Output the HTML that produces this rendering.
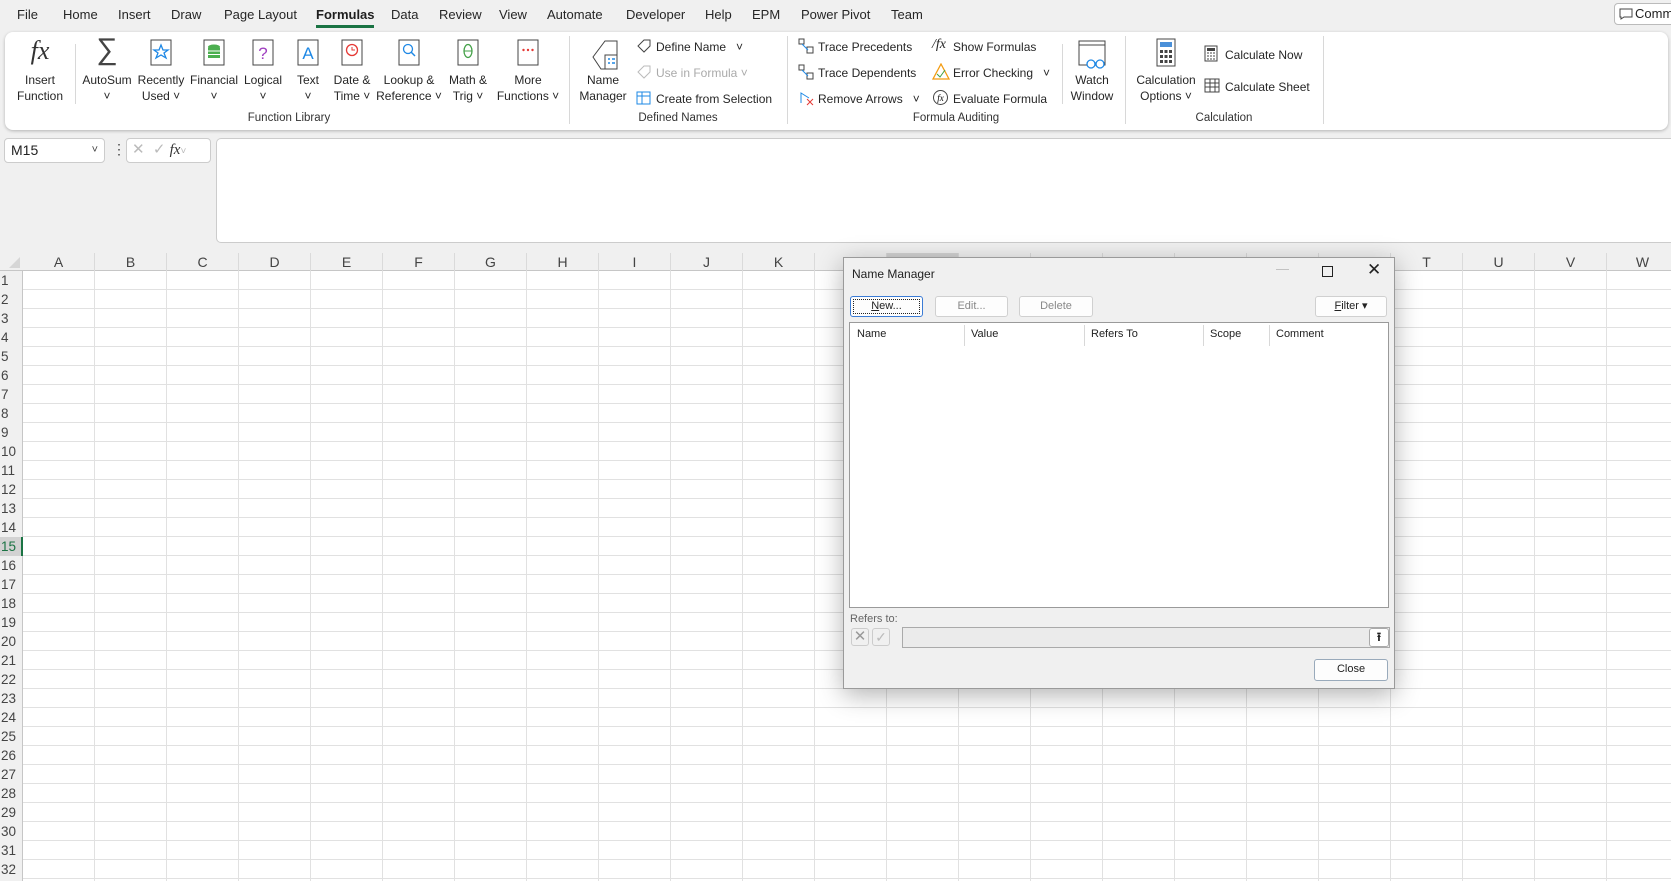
<!DOCTYPE html>
<html><head><meta charset="utf-8"><style>
*{box-sizing:border-box;margin:0;padding:0}
body{width:1671px;height:881px;overflow:hidden;background:#f0f0f0;font-family:"Liberation Sans",Arial,sans-serif;color:#222;position:relative}
.a{position:absolute;white-space:nowrap}
.tab{position:absolute;top:7px;font-size:13px;color:#262626}
.ribbon{position:absolute;left:5px;top:32px;width:1663px;height:98px;background:#fff;border-radius:8px;box-shadow:0 1px 3px rgba(0,0,0,.25)}
.big{position:absolute;top:72px;font-size:12px;line-height:16px;text-align:center;transform:translateX(-50%);color:#262626}
.ico{position:absolute;top:39px;transform:translateX(-50%)}
.sm{position:absolute;font-size:12px;color:#262626}
.gl{position:absolute;top:112px;font-size:11.5px;color:#333;transform:translateX(-50%)}
.sep{position:absolute;width:1px;background:#d8d8d8}
.colh{position:absolute;top:253px;height:18px;font-size:14px;color:#444;text-align:center;line-height:19px}
.rowh{position:absolute;left:0;width:23px;font-size:13.5px;color:#444;line-height:19px;padding-left:1px}
.btn{position:absolute;height:21px;border:1px solid #d0d0d0;border-radius:3px;background:#fdfdfd;font-size:11px;text-align:center;line-height:19px;color:#222}
</style></head><body>
<div class="tab" style="left:17px">File</div>
<div class="tab" style="left:63px">Home</div>
<div class="tab" style="left:118px">Insert</div>
<div class="tab" style="left:171px">Draw</div>
<div class="tab" style="left:224px">Page Layout</div>
<div class="tab" style="left:316px;font-weight:bold;color:#1e1e1e">Formulas</div>
<div class="a" style="left:316px;top:25px;width:58px;height:3px;background:#1a7343"></div>
<div class="tab" style="left:391px">Data</div>
<div class="tab" style="left:439px">Review</div>
<div class="tab" style="left:499px">View</div>
<div class="tab" style="left:547px">Automate</div>
<div class="tab" style="left:626px">Developer</div>
<div class="tab" style="left:705px">Help</div>
<div class="tab" style="left:752px">EPM</div>
<div class="tab" style="left:801px">Power Pivot</div>
<div class="tab" style="left:891px">Team</div>
<div class="a" style="left:1614px;top:3px;width:70px;height:22px;border:1px solid #bbb;border-radius:4px;background:#fff;font-size:13px;line-height:20px;padding-left:20px">Comm</div>
<svg class="a" style="left:1619px;top:8px" width="14" height="12"><path d="M1 1h12v8H5l-3 2V9H1z" fill="none" stroke="#444"/></svg>

<div class="ribbon"></div>
<div class="ico" style="left:40px;font-family:'Liberation Serif',serif;font-style:italic;font-size:26px;color:#333;top:36px">fx</div>
<div class="ico" style="left:107px;font-size:30px;color:#444;top:33px">∑</div>
<svg class="ico" style="left:161px" width="22" height="28"><rect x="1" y="1" width="20" height="25" fill="#fff" stroke="#444"/><path d="M11 6l2 5h5l-4 3 2 5-5-3-5 3 2-5-4-3h5z" fill="none" stroke="#1e88e5" stroke-width="1.3"/></svg>
<svg class="ico" style="left:214px" width="22" height="28"><rect x="1" y="1" width="20" height="25" fill="#fff" stroke="#444"/><ellipse cx="11" cy="8" rx="6" ry="2.5" fill="#4caf50"/><rect x="5" y="9" width="12" height="10" fill="#4caf50"/><path d="M5 12h12M5 15.5h12" stroke="#fff"/></svg>
<svg class="ico" style="left:263px" width="22" height="28"><rect x="1" y="1" width="20" height="25" fill="#fff" stroke="#444"/><text x="11" y="20" font-size="17" fill="#a040c0" text-anchor="middle" font-family="Liberation Sans">?</text></svg>
<svg class="ico" style="left:308px" width="22" height="28"><rect x="1" y="1" width="20" height="25" fill="#fff" stroke="#444"/><text x="11" y="20" font-size="17" fill="#1e88e5" text-anchor="middle" font-family="Liberation Sans">A</text></svg>
<svg class="ico" style="left:352px" width="22" height="28"><rect x="1" y="1" width="20" height="25" fill="#fff" stroke="#444"/><circle cx="11" cy="11" r="5.5" fill="none" stroke="#e53935" stroke-width="1.3"/><path d="M11 8v3h3" stroke="#e53935" fill="none"/></svg>
<svg class="ico" style="left:409px" width="22" height="28"><rect x="1" y="1" width="20" height="25" fill="#fff" stroke="#444"/><circle cx="10" cy="10" r="4.5" fill="none" stroke="#1e88e5" stroke-width="1.3"/><path d="M13 13l4 4" stroke="#1e88e5" stroke-width="1.5"/></svg>
<svg class="ico" style="left:468px" width="22" height="28"><rect x="1" y="1" width="20" height="25" fill="#fff" stroke="#444"/><ellipse cx="11" cy="12" rx="4" ry="6.5" fill="none" stroke="#43a047" stroke-width="1.3"/><path d="M7 12h8" stroke="#43a047"/></svg>
<svg class="ico" style="left:528px" width="22" height="28"><rect x="1" y="1" width="20" height="25" fill="#fff" stroke="#444"/><circle cx="6.5" cy="11" r="1.2" fill="#e53935"/><circle cx="11" cy="11" r="1.2" fill="#e53935"/><circle cx="15.5" cy="11" r="1.2" fill="#e53935"/></svg>
<svg class="ico" style="left:606px" width="34" height="34"><path d="M16 2h12v20l-8 8h-8L4 18z" fill="#fff" stroke="#444"/><rect x="16" y="16" width="12" height="14" fill="#fff" stroke="#444"/><path d="M19 20h2M23 20h3M19 24h2M23 24h3" stroke="#1e88e5" stroke-width="1.5"/></svg>
<div class="big" style="left:40px">Insert<br>Function</div>
<div class="big" style="left:107px">AutoSum<br>˅</div>
<div class="big" style="left:161px">Recently<br>Used ˅</div>
<div class="big" style="left:214px">Financial<br>˅</div>
<div class="big" style="left:263px">Logical<br>˅</div>
<div class="big" style="left:308px">Text<br>˅</div>
<div class="big" style="left:352px">Date &amp;<br>Time ˅</div>
<div class="big" style="left:409px">Lookup &amp;<br>Reference ˅</div>
<div class="big" style="left:468px">Math &amp;<br>Trig ˅</div>
<div class="big" style="left:528px">More<br>Functions ˅</div>
<div class="big" style="left:603px">Name<br>Manager</div>
<div class="sep" style="left:75px;top:44px;height:60px"></div>
<div class="sep" style="left:569px;top:36px;height:88px"></div>
<div class="sep" style="left:787px;top:36px;height:88px"></div>
<div class="sep" style="left:1062px;top:44px;height:60px"></div>
<div class="sep" style="left:1125px;top:36px;height:88px"></div>
<div class="sep" style="left:1323px;top:36px;height:88px"></div>
<div class="gl" style="left:289px">Function Library</div>
<div class="gl" style="left:678px">Defined Names</div>
<div class="gl" style="left:956px">Formula Auditing</div>
<div class="gl" style="left:1224px">Calculation</div>
<svg class="a" style="left:636px;top:38px" width="16" height="16"><path d="M8 2h6v6l-6 6-6-6z" fill="none" stroke="#444"/></svg>
<div class="sm" style="left:656px;top:40px">Define Name &nbsp;&nbsp;˅</div>
<svg class="a" style="left:636px;top:64px" width="16" height="16"><path d="M8 2h6v6l-6 6-6-6z" fill="none" stroke="#bbb"/></svg>
<div class="sm" style="left:656px;top:66px;color:#aaa">Use in Formula ˅</div>
<svg class="a" style="left:636px;top:90px" width="16" height="16"><rect x="1" y="2" width="13" height="12" fill="none" stroke="#1e88e5"/><path d="M1 6h13M6 2v12" stroke="#1e88e5"/></svg>
<div class="sm" style="left:656px;top:92px">Create from Selection</div>
<svg class="a" style="left:798px;top:38px" width="16" height="16"><rect x="1" y="1" width="5" height="5" fill="none" stroke="#444"/><rect x="9" y="9" width="6" height="6" fill="none" stroke="#444"/><path d="M4 6l6 6" stroke="#1e88e5"/></svg>
<div class="sm" style="left:818px;top:40px">Trace Precedents</div>
<svg class="a" style="left:798px;top:64px" width="16" height="16"><rect x="1" y="1" width="5" height="5" fill="none" stroke="#444"/><rect x="9" y="9" width="6" height="6" fill="none" stroke="#444"/><path d="M4 6l6 6" stroke="#1e88e5"/></svg>
<div class="sm" style="left:818px;top:66px">Trace Dependents</div>
<svg class="a" style="left:798px;top:90px" width="16" height="16"><path d="M3 13V3l8 5" fill="none" stroke="#1e88e5"/><path d="M9 9l6 6M15 9l-6 6" stroke="#e53935"/></svg>
<div class="sm" style="left:818px;top:92px">Remove Arrows &nbsp;&nbsp;˅</div>
<div class="sm" style="left:932px;top:37px;font-family:'Liberation Serif',serif;font-style:italic;font-size:14px">/fx</div>
<div class="sm" style="left:953px;top:40px">Show Formulas</div>
<svg class="a" style="left:932px;top:63px" width="18" height="17"><path d="M9 1l8 15H1z" fill="none" stroke="#f39c12" stroke-width="1.3"/><path d="M5 11l3 3 5-7" fill="none" stroke="#43a047"/></svg>
<div class="sm" style="left:953px;top:66px">Error Checking &nbsp;&nbsp;˅</div>
<svg class="a" style="left:932px;top:89px" width="17" height="17"><circle cx="8.5" cy="8.5" r="7" fill="none" stroke="#444"/><text x="8.5" y="12" font-size="9" text-anchor="middle" font-style="italic" font-family="Liberation Serif">fx</text></svg>
<div class="sm" style="left:953px;top:92px">Evaluate Formula</div>
<svg class="ico" style="left:1092px" width="30" height="32"><rect x="2" y="2" width="26" height="24" fill="#fff" stroke="#444"/><path d="M2 6h26" stroke="#444"/><circle cx="14" cy="25" r="4" fill="#fff" stroke="#1e88e5" stroke-width="1.3"/><circle cx="23" cy="25" r="4" fill="#fff" stroke="#1e88e5" stroke-width="1.3"/></svg>
<div class="big" style="left:1092px">Watch<br>Window</div>
<svg class="ico" style="left:1166px;top:38px" width="22" height="30"><rect x="2" y="1" width="18" height="27" fill="#fff" stroke="#444"/><rect x="5" y="4" width="12" height="5" fill="#4a90d9"/><g fill="#444"><rect x="5" y="12" width="3" height="3"/><rect x="9.5" y="12" width="3" height="3"/><rect x="14" y="12" width="3" height="3"/><rect x="5" y="17" width="3" height="3"/><rect x="9.5" y="17" width="3" height="3"/><rect x="14" y="17" width="3" height="3"/><rect x="5" y="22" width="3" height="3"/><rect x="9.5" y="22" width="3" height="3"/><rect x="14" y="22" width="3" height="3"/></g></svg>
<div class="big" style="left:1166px">Calculation<br>Options ˅</div>
<svg class="a" style="left:1204px;top:45px" width="14" height="17"><rect x="1" y="1" width="12" height="15" fill="#fff" stroke="#444"/><rect x="3" y="3" width="8" height="3" fill="#444"/><path d="M3 8h8M3 11h8M3 14h8" stroke="#444" stroke-dasharray="2 1"/></svg>
<div class="sm" style="left:1225px;top:48px">Calculate Now</div>
<svg class="a" style="left:1204px;top:78px" width="17" height="16"><rect x="1" y="1" width="14" height="13" fill="#fff" stroke="#444"/><path d="M1 5h14M1 9h14M6 1v13M11 1v13" stroke="#444"/></svg>
<div class="sm" style="left:1225px;top:80px">Calculate Sheet</div>

<div class="a" style="left:4px;top:138px;width:101px;height:25px;background:#fff;border:1px solid #ccc;border-radius:4px;font-size:14px;line-height:23px;padding-left:6px">M15<span style="position:absolute;right:6px;font-size:11px;color:#444">˅</span></div>
<div class="a" style="left:112px;top:141px;font-size:14px;color:#444">⋮</div>
<div class="a" style="left:126px;top:138px;width:85px;height:25px;background:#fff;border:1px solid #ccc;border-radius:4px;color:#bbb;font-size:15px;line-height:22px;padding-left:5px">✕&nbsp; ✓ <span style="color:#333;font-family:'Liberation Serif',serif;font-style:italic">fx</span><span style="font-size:10px">˅</span></div>
<div class="a" style="left:216px;top:138px;width:1460px;height:105px;background:#fff;border:1px solid #ccc;border-radius:5px"></div>

<div class="a" style="left:0;top:253px;width:1671px;height:18px;background:#f0f0f0;border-bottom:1px solid #c6c6c6"></div>
<svg class="a" style="left:8px;top:257px" width="13" height="12"><path d="M12 0V11H1z" fill="#d6d6d6"/></svg>
<div class="a" style="left:887px;top:253px;width:72px;height:18px;background:#d2d2d2;border-bottom:2px solid #1a7343"></div>
<div class="a" style="left:23px;top:271px;width:1648px;height:610px;background-color:#fff;background-image:linear-gradient(90deg,#e1e1e1 1px,transparent 1px),linear-gradient(#e1e1e1 1px,transparent 1px);background-size:72px 19px;background-position:-1px -1px"></div>
<div class="a" style="left:0;top:271px;width:23px;height:610px;background:#f0f0f0;border-right:1px solid #c6c6c6"></div>
<div class="a" style="left:0;top:537px;width:23px;height:19px;background:#d2d2d2;border-right:2px solid #1a7343"></div>
<div id="cols"></div><div id="rows"></div>
<script>
var L="ABCDEFGHIJKLMNOPQRSTUVW",h="";
for(var i=0;i<L.length;i++)h+='<div class="colh" style="left:'+(23+i*72)+'px;width:72px;border-right:1px solid #dadada'+(i==12?';color:#1a7343':'')+'">'+L[i]+'</div>';
document.getElementById('cols').innerHTML=h;h="";
for(var r=1;r<=32;r++)h+='<div class="rowh" style="top:'+(271+(r-1)*19)+'px'+(r==15?';color:#1a7343':'')+'">'+r+'</div>';
document.getElementById('rows').innerHTML=h;
</script>

<div class="a" style="left:843px;top:257px;width:552px;height:432px;background:#f0f0f0;border:1px solid #9a9a9a;box-shadow:0 6px 24px rgba(0,0,0,.3)">
  <div class="a" style="left:8px;top:9px;font-size:12px;color:#222">Name Manager</div>
  <div class="a" style="left:432px;top:3px;color:#bbb;font-size:13px">—</div>
  <div class="a" style="left:478px;top:8px;width:11px;height:11px;border:1.3px solid #222"></div>
  <div class="a" style="left:523px;top:2px;font-size:17px;color:#222">✕</div>
  <div class="btn" style="left:6px;top:38px;width:73px;border:1.5px solid #3a7bd5;outline:1px dotted #222;outline-offset:-4px"><u>N</u>ew...</div>
  <div class="btn" style="left:91px;top:38px;width:73px;color:#888">Edit...</div>
  <div class="btn" style="left:175px;top:38px;width:74px;color:#888">Delete</div>
  <div class="btn" style="left:471px;top:38px;width:72px"><u>F</u>ilter ▾</div>
  <div class="a" style="left:5px;top:64px;width:540px;height:286px;background:#fff;border:1px solid #9a9a9a">
    <div class="a" style="left:0;top:0;width:538px;height:23px;font-size:11px;line-height:23px">
      <span class="a" style="left:7px">Name</span><span class="a" style="left:121px">Value</span><span class="a" style="left:241px">Refers To</span><span class="a" style="left:360px">Scope</span><span class="a" style="left:426px">Comment</span>
      <div class="sep" style="left:114px;top:2px;height:21px"></div><div class="sep" style="left:234px;top:2px;height:21px"></div><div class="sep" style="left:353px;top:2px;height:21px"></div><div class="sep" style="left:419px;top:2px;height:21px"></div>
    </div>
  </div>
  <div class="a" style="left:6px;top:355px;font-size:11px;color:#666">Refers to:</div>
  <div class="a" style="left:7px;top:370px;width:18px;height:18px;border:1px solid #ccc;border-radius:3px;color:#999;font-size:15px;line-height:16px;text-align:center">✕</div>
  <div class="a" style="left:28px;top:370px;width:18px;height:18px;border:1px solid #ccc;border-radius:3px;color:#bbb;font-size:14px;line-height:16px;text-align:center">✓</div>
  <div class="a" style="left:58px;top:369px;width:488px;height:21px;border:1px solid #aaa;background:#ebebeb"></div>
  <div class="a" style="left:525px;top:370px;width:20px;height:19px;border:1px solid #aaa;border-radius:3px;background:#fff;font-size:12px;text-align:center;line-height:17px;font-weight:bold">⭱</div>
  <div class="btn" style="left:470px;top:401px;width:74px;height:22px;border-color:#9ab">Close</div>
</div>
</body></html>
